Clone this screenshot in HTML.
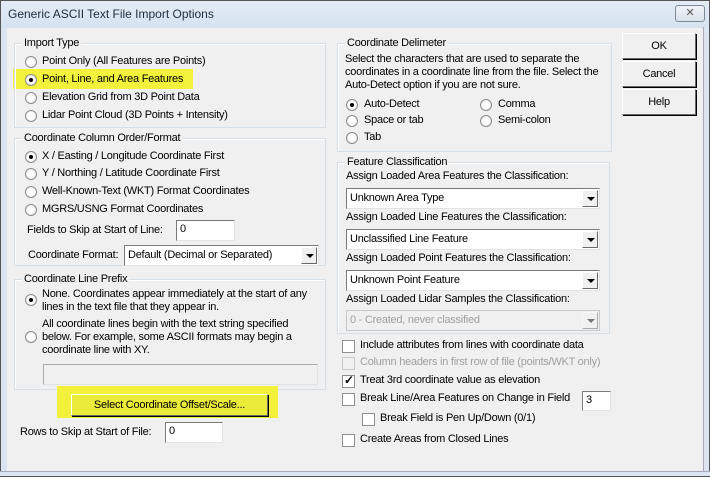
<!DOCTYPE html>
<html><head><meta charset="utf-8"><style>
*{box-sizing:border-box;margin:0;padding:0}
body{width:710px;height:477px;overflow:hidden;background:#f0f0f0;font-family:"Liberation Sans",sans-serif;font-size:11px;letter-spacing:-0.25px;color:#000;position:relative}
.a{position:absolute;white-space:nowrap}
.title{left:0;top:0;width:710px;height:28px;background:linear-gradient(#e4ecf6,#d6e2f0);border:1px solid #555;border-bottom:none}
.grp{position:absolute;border:1px solid #d5dfe5;box-shadow:inset 1px 1px 0 #fff}
.leg{position:absolute;background:#f0f0f0;padding:0 2px;top:-7px;left:7px}
.rad{position:absolute;width:12px;height:12px;border-radius:50%;border:1px solid #8b8b8b;background:radial-gradient(#fff 40%,#e6e6e6)}
.rad.on::after{content:"";position:absolute;left:3px;top:3px;width:4px;height:4px;border-radius:50%;background:#000}
.chk{position:absolute;width:13px;height:13px;border:1px solid #8e8f8f;background:#fff}
.inp{position:absolute;background:#fff;border:1px solid #7a7a7a;border-right-color:#e3e3e3;border-bottom-color:#e3e3e3;padding-left:3px;line-height:17px}
.sel{position:absolute;background:#fff;border:1px solid #7a7a7a;border-right-color:#e3e3e3;border-bottom-color:#e3e3e3;padding-left:3px;line-height:18px}
.sel .ar{position:absolute;right:1px;top:1px;bottom:1px;width:16px;background:#f0f0f0;border:1px solid #fff;border-right-color:#696969;border-bottom-color:#696969}
.sel .ar::after{content:"";position:absolute;left:4px;top:6px;border-left:4px solid transparent;border-right:4px solid transparent;border-top:4px solid #000}
.btn{position:absolute;background:#f0f0f0;border:1px solid #fff;border-right-color:#696969;border-bottom-color:#696969;box-shadow:1px 1px 0 #000;text-align:center}
.dis{color:#a0a0a0}
</style></head><body>
<div class="a title"></div>
<div class="a" style="left:8px;top:7px;font-size:12px;color:#1e2d3d;letter-spacing:0">Generic ASCII Text File Import Options</div>
<div class="a" style="left:675px;top:5px;width:30px;height:17px;border:1px solid #7e8a99;border-radius:3px;background:linear-gradient(#f0f4f9,#d9e2ec);text-align:center;font-size:11px;line-height:15px;color:#555">✕</div>
<div class="a" style="left:0;top:27px;width:7px;height:450px;background:#dbe5f1;border-left:1px solid #555"></div>
<div class="a" style="left:703px;top:27px;width:7px;height:450px;background:#dbe5f1;border-right:1px solid #555;border-left:1px solid #aab"></div>
<div class="a" style="left:0;top:471px;width:710px;height:6px;background:#dbe5f1;border-bottom:1px solid #555;border-top:1px solid #aab"></div>

<!-- Import Type -->
<div class="a" style="left:13px;top:69px;width:180px;height:20px;background:#f2f23c"></div>
<div class="grp" style="left:14px;top:43px;width:312px;height:85px"><span class="leg">Import Type</span></div>
<div class="rad" style="left:25px;top:56px"></div><div class="a" style="left:42px;top:55px">Point Only (All Features are Points)</div>
<div class="rad on" style="left:25px;top:74px"></div><div class="a" style="left:42px;top:73px">Point, Line, and Area Features</div>
<div class="rad" style="left:25px;top:92px"></div><div class="a" style="left:42px;top:91px">Elevation Grid from 3D Point Data</div>
<div class="rad" style="left:25px;top:110px"></div><div class="a" style="left:42px;top:109px">Lidar Point Cloud (3D Points + Intensity)</div>

<!-- Coordinate Column -->
<div class="grp" style="left:14px;top:138px;width:312px;height:128px"><span class="leg">Coordinate Column Order/Format</span></div>
<div class="rad on" style="left:25px;top:151px"></div><div class="a" style="left:42px;top:150px">X / Easting / Longitude Coordinate First</div>
<div class="rad" style="left:25px;top:168px"></div><div class="a" style="left:42px;top:167px">Y / Northing / Latitude Coordinate First</div>
<div class="rad" style="left:25px;top:186px"></div><div class="a" style="left:42px;top:185px">Well-Known-Text (WKT) Format Coordinates</div>
<div class="rad" style="left:25px;top:204px"></div><div class="a" style="left:42px;top:203px">MGRS/USNG Format Coordinates</div>
<div class="a" style="left:27px;top:224px">Fields to Skip at Start of Line:</div>
<div class="inp" style="left:176px;top:220px;width:59px;height:21px">0</div>
<div class="a" style="left:28px;top:249px">Coordinate Format:</div>
<div class="sel" style="left:124px;top:245px;width:195px;height:21px">Default (Decimal or Separated)<span class="ar"></span></div>

<!-- Line prefix -->
<div class="grp" style="left:14px;top:279px;width:312px;height:111px"><span class="leg">Coordinate Line Prefix</span></div>
<div class="rad on" style="left:25px;top:294px"></div>
<div class="a" style="left:42px;top:288px;line-height:13px">None. Coordinates appear immediately at the start of any<br>lines in the text file that they appear in.</div>
<div class="rad" style="left:25px;top:331px"></div>
<div class="a" style="left:42px;top:318px;line-height:13px">All coordinate lines begin with the text string specified<br>below. For example, some ASCII formats may begin a<br>coordinate line with XY.</div>
<div class="a" style="left:43px;top:364px;width:275px;height:21px;background:#f0f0f0;border:1px solid #aaa;border-right-color:#e3e3e3;border-bottom-color:#e3e3e3"></div>

<div class="a" style="left:57px;top:386px;width:221px;height:32px;background:#f2f23c"></div>
<div class="btn" style="left:71px;top:394px;width:197px;height:22px;line-height:20px;background:#ebeb3a">Select Coordinate Offset/Scale...</div>
<div class="a" style="left:20px;top:426px">Rows to Skip at Start of File:</div>
<div class="inp" style="left:165px;top:422px;width:58px;height:21px">0</div>

<!-- Delimeter -->
<div class="grp" style="left:337px;top:43px;width:275px;height:109px"><span class="leg">Coordinate Delimeter</span></div>
<div class="a" style="left:345px;top:53px;line-height:13px">Select the characters that are used to separate the<br>coordinates in a coordinate line from the file. Select the<br>Auto-Detect option if you are not sure.</div>
<div class="rad on" style="left:346px;top:99px"></div><div class="a" style="left:364px;top:98px">Auto-Detect</div>
<div class="rad" style="left:480px;top:99px"></div><div class="a" style="left:498px;top:98px">Comma</div>
<div class="rad" style="left:346px;top:115px"></div><div class="a" style="left:364px;top:114px">Space or tab</div>
<div class="rad" style="left:480px;top:115px"></div><div class="a" style="left:498px;top:114px">Semi-colon</div>
<div class="rad" style="left:346px;top:132px"></div><div class="a" style="left:364px;top:131px">Tab</div>

<!-- Buttons -->
<div class="btn" style="left:622px;top:33px;width:74px;height:26px;line-height:24px">OK</div>
<div class="btn" style="left:622px;top:61px;width:74px;height:26px;line-height:24px">Cancel</div>
<div class="btn" style="left:622px;top:89px;width:74px;height:26px;line-height:24px">Help</div>

<!-- Feature Classification -->
<div class="grp" style="left:337px;top:162px;width:273px;height:172px"><span class="leg">Feature Classification</span></div>
<div class="a" style="left:346px;top:170px">Assign Loaded Area Features the Classification:</div>
<div class="sel" style="left:346px;top:188px;width:254px;height:21px">Unknown Area Type<span class="ar"></span></div>
<div class="a" style="left:346px;top:211px">Assign Loaded Line Features the Classification:</div>
<div class="sel" style="left:346px;top:229px;width:254px;height:21px">Unclassified Line Feature<span class="ar"></span></div>
<div class="a" style="left:346px;top:252px">Assign Loaded Point Features the Classification:</div>
<div class="sel" style="left:346px;top:270px;width:254px;height:21px">Unknown Point Feature<span class="ar"></span></div>
<div class="a" style="left:346px;top:293px">Assign Loaded Lidar Samples the Classification:</div>
<div class="sel dis" style="left:346px;top:310px;width:254px;height:21px;background:#f0f0f0;border-color:#c8c8c8">0 - Created, never classified<span class="ar" style="opacity:.5"></span></div>

<!-- Checkboxes -->
<div class="chk" style="left:342px;top:340px"></div><div class="a" style="left:360px;top:339px">Include attributes from lines with coordinate data</div>
<div class="chk" style="left:342px;top:357px;border-color:#c8c8c8;background:#f0f0f0"></div><div class="a dis" style="left:360px;top:356px">Column headers in first row of file (points/WKT only)</div>
<div class="chk" style="left:342px;top:375px"><span style="position:absolute;left:1px;top:-3px;font-size:12px;font-weight:bold">✓</span></div><div class="a" style="left:360px;top:374px">Treat 3rd coordinate value as elevation</div>
<div class="chk" style="left:342px;top:393px"></div><div class="a" style="left:360px;top:392px">Break Line/Area Features on Change in Field</div>
<div class="inp" style="left:582px;top:391px;width:29px;height:20px">3</div>
<div class="chk" style="left:362px;top:413px"></div><div class="a" style="left:380px;top:412px">Break Field is Pen Up/Down (0/1)</div>
<div class="chk" style="left:342px;top:434px"></div><div class="a" style="left:360px;top:433px">Create Areas from Closed Lines</div>
</body></html>
